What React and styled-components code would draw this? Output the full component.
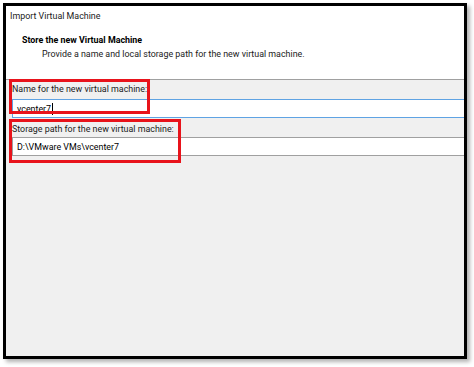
import React from "react";
import styled, { createGlobalStyle } from "styled-components";

const Global = createGlobalStyle`
  html, body { margin: 0; padding: 0; background: #fff; }
  body { font-family: Roboto, "Noto Sans", sans-serif; }
`;

const Page = styled.div`
  width: 474px;
  height: 367px;
  padding: 3px 0 0 3px;
  box-sizing: border-box;
  background: #fff;
`;

const Frame = styled.div`
  position: relative;
  width: 464px;
  height: 356px;
  box-sizing: border-box;
  border: 3px solid #000;
  box-shadow: 3px 3px 4px rgba(0, 0, 0, 0.3);
  display: flex;
  flex-direction: column;
  background: #f0f0f0;
  font-size: 8.9px;
  color: #000;
`;

const Header = styled.div`
  background: #fff;
  height: 73px;
  border-bottom: 1px solid #a0a0a0;
  display: flex;
  flex-direction: column;
`;

const WindowTitle = styled.div`
  padding: 3px 0 0 4px;
  line-height: 14px;
  color: #1a1a1a;
`;

const PageTitle = styled.div`
  margin: 10px 0 0 16px;
  font-weight: 700;
  line-height: 14px;
`;

const PageSub = styled.div`
  margin: 0 0 0 36px;
  line-height: 14px;
  color: #1a1a1a;
`;

const Body = styled.div`
  flex: 1;
  display: flex;
  flex-direction: column;
  padding: 2px 0 0 6px;
`;

const Label = styled.div`
  line-height: 14px;
  margin-top: ${(p) => p.$mt || 0}px;
  color: #1a1a1a;
`;

const Input = styled.div`
  height: 17px;
  margin-top: ${(p) => (p.$focus ? 3 : 1)}px;
  background: #fff;
  border-top: 1px solid ${(p) => (p.$focus ? "#5fa3e3" : "#a0a0a0")};
  border-bottom: 1px solid ${(p) => (p.$focus ? "#5fa3e3" : "#a0a0a0")};
  border-left: 1px solid ${(p) => (p.$focus ? "#5fa3e3" : "#a0a0a0")};
  display: flex;
  align-items: center;
  padding-left: 4px;
  line-height: 14px;
`;

const Caret = styled.span`
  display: inline-block;
  width: 1px;
  height: 12px;
  background: #000;
  margin-left: 1px;
`;

const Highlight = styled.div`
  position: absolute;
  border: 3px solid #e8131b;
  box-sizing: border-box;
  left: ${(p) => p.$x}px;
  top: ${(p) => p.$y}px;
  width: ${(p) => p.$w}px;
  height: ${(p) => p.$h}px;
  pointer-events: none;
`;

export default function App() {
  return (
    <>
      <Global />
      <Page>
        <Frame>
          <Header>
            <WindowTitle>Import Virtual Machine</WindowTitle>
            <PageTitle>Store the new Virtual Machine</PageTitle>
            <PageSub>Provide a name and local storage path for the new virtual machine.</PageSub>
          </Header>
          <Body>
            <Label>Name for the new virtual machine:</Label>
            <Input $focus>
              vcenter7<Caret />
            </Input>
            <Label $mt={4}>Storage path for the new virtual machine:</Label>
            <Input>D:\VMware VMs\vcenter7</Input>
          </Body>
          <Highlight $x={3} $y={73} $w={141} $h={35} />
          <Highlight $x={3} $y={113} $w={172} $h={44} />
        </Frame>
      </Page>
    </>
  );
}
